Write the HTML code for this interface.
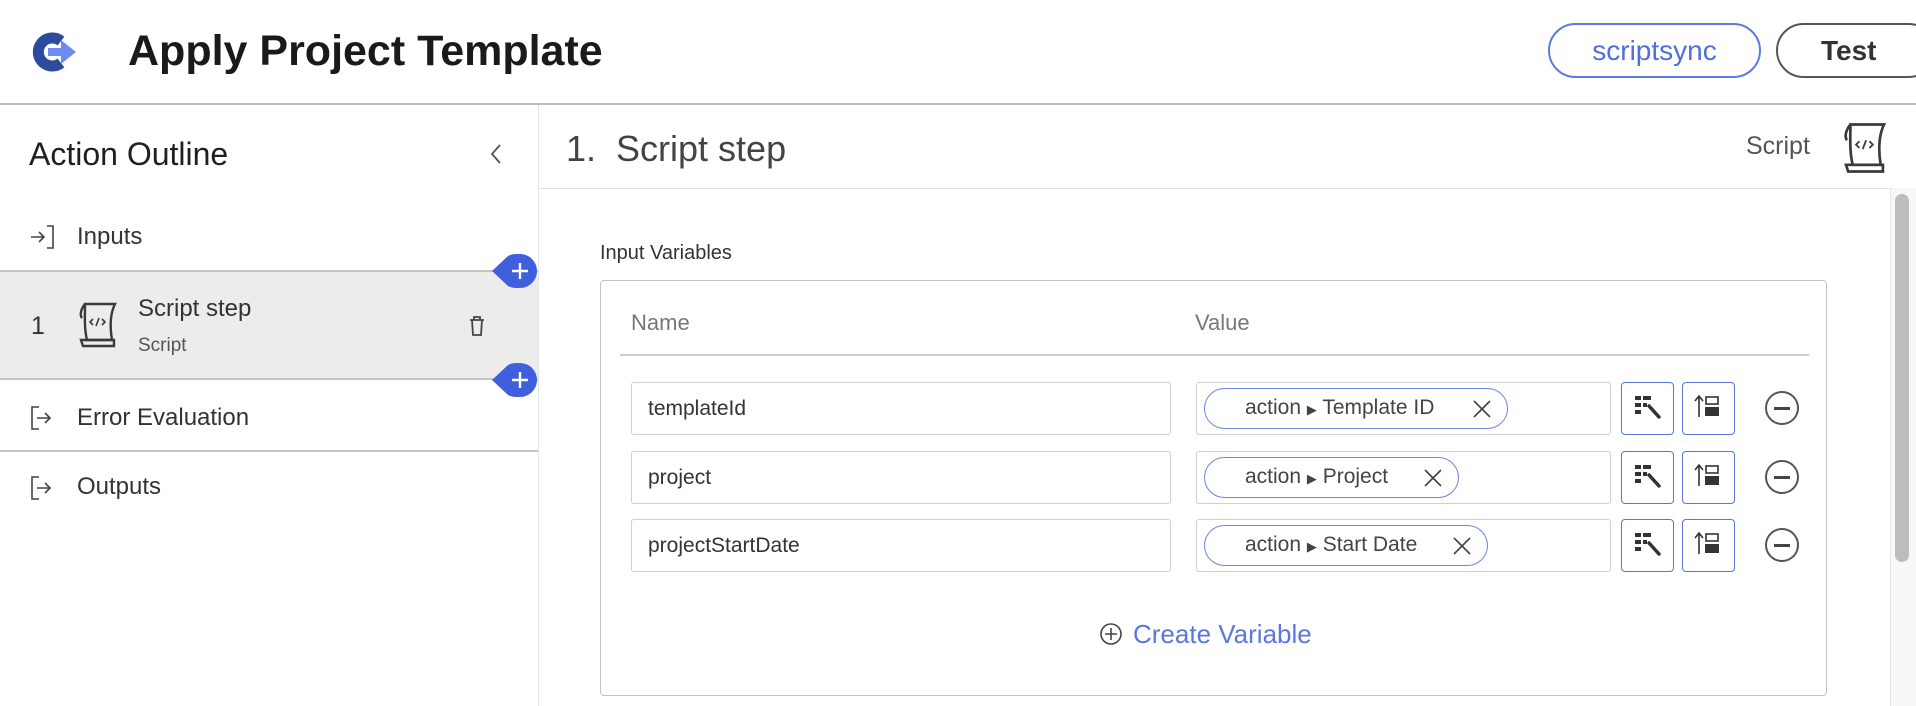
<!DOCTYPE html>
<html><head><meta charset="utf-8"><style>
*{margin:0;padding:0;box-sizing:border-box}
body{width:1916px;height:706px;overflow:hidden;background:#fff;font-family:"Liberation Sans",sans-serif;color:#2a2a2a;position:relative}
.a{position:absolute}
.t{position:absolute;white-space:nowrap;line-height:1}
.inp{position:absolute;border:1.5px solid #cfcfcf;border-radius:3px;background:#fff}
.pill{position:absolute;border:1.5px solid #6a86e0;border-radius:22px;height:41px;font-size:21px;color:#444;line-height:38px;padding-left:40px}
.pill svg{position:absolute;right:16px;top:11px}
.btn{position:absolute;width:53px;height:53px;border:1.5px solid #5a75d8;border-radius:4px;background:#fff}
.mc{position:absolute;width:34px;height:34px;border:2px solid #555;border-radius:50%}
.mc:after{content:"";position:absolute;left:7px;right:7px;top:14px;height:2.5px;background:#444}
</style></head><body>
<svg class="a" style="left:30px;top:30px" width="54" height="44" viewBox="0 0 54 44">
<path d="M31 11 A14 14 0 1 0 31 33" stroke="#2c4a9e" stroke-width="11" fill="none"/>
<path d="M18 18 H31 V10 L46 22 L31 34 V26 H18 Z" fill="#6d8cf0"/>
</svg>
<div class="t" style="left:128px;top:30px;font-size:43px;font-weight:bold;color:#1a1a1a">Apply Project Template</div>
<div class="a" style="left:1548px;top:23px;width:213px;height:55px;border:2px solid #5a7be0;border-radius:28px;color:#4f6fdc;font-size:28px;text-align:center;line-height:51px">scriptsync</div>
<div class="a" style="left:1776px;top:23px;width:160px;height:55px;border:2px solid #555;border-radius:28px;color:#333;font-size:28px;font-weight:bold;padding-left:43px;line-height:51px">Test</div>
<div class="a" style="left:0;top:103px;width:1916px;height:2px;background:#bdbdbd"></div>
<div class="a" style="left:538px;top:105px;width:1px;height:601px;background:#e4e4e4"></div>
<div class="t" style="left:29px;top:138px;font-size:32px;color:#1f1f1f">Action Outline</div>
<svg class="a" style="left:488px;top:142px" width="16" height="24"><path d="M12 3 L4 12 L12 21" stroke="#555" stroke-width="1.8" fill="none"/></svg>
<svg class="a" style="left:29px;top:223px" width="28" height="28" viewBox="0 0 28 28"><path d="M2 14 H15 M10 9 L15 14 L10 19" stroke="#444" stroke-width="1.6" fill="none"/><path d="M18 3 H24 V25 H18" stroke="#444" stroke-width="1.6" fill="none"/></svg>
<div class="t" style="left:77px;top:225px;font-size:24px;color:#333">Inputs</div>
<div class="a" style="left:0;top:270px;width:538px;height:110px;background:#ececec;border-top:2px solid #c4c4c4;border-bottom:2px solid #c4c4c4"></div>
<div class="t" style="left:31px;top:314px;font-size:25px;color:#333">1</div>
<svg class="a" style="left:76px;top:300px" width="44" height="50" viewBox="0 0 44 50"><path d="M9 4 H39 C34 14 34 28 36 40 H11 C8 28 9 14 9 4 Z M9 4 C4 10 4 16 6 18" stroke="#3a3a3a" stroke-width="2.4" fill="none"/><path d="M5 40 H38 V46 H7 Z" stroke="#3a3a3a" stroke-width="2.4" fill="none"/><path d="M17 19 L14 22 L17 25 M20 26 L23 18 M26 19 L29 22 L26 25" stroke="#3a3a3a" stroke-width="1.6" fill="none"/></svg>
<div class="t" style="left:138px;top:297px;font-size:24px;color:#333">Script step</div>
<div class="t" style="left:138px;top:336px;font-size:19px;color:#555">Script</div>
<svg class="a" style="left:467px;top:315px" width="20" height="22" viewBox="0 0 20 22"><path d="M3 5 H17 M7 5 V2 H13 V5 M5 5 L6 20 H14 L15 5" stroke="#444" stroke-width="1.8" fill="none"/></svg>
<svg class="a" style="left:490px;top:252px" width="50" height="38" viewBox="0 0 50 38"><path d="M2 19 L18 4 A17 17 0 1 1 18 34 Z" fill="#3f5fdc"/><circle cx="30" cy="19" r="17" fill="#3f5fdc"/><path d="M30 11 V27 M22 19 H38" stroke="#fff" stroke-width="2.4"/></svg>
<svg class="a" style="left:490px;top:361px" width="50" height="38" viewBox="0 0 50 38"><path d="M2 19 L18 4 A17 17 0 1 1 18 34 Z" fill="#3f5fdc"/><circle cx="30" cy="19" r="17" fill="#3f5fdc"/><path d="M30 11 V27 M22 19 H38" stroke="#fff" stroke-width="2.4"/></svg>
<svg class="a" style="left:29px;top:404px" width="28" height="28" viewBox="0 0 28 28"><path d="M10 3 H3 V25 H10" stroke="#444" stroke-width="1.6" fill="none"/><path d="M8 14 H21 M16 9 L21 14 L16 19" stroke="#444" stroke-width="1.6" fill="none"/></svg>
<div class="t" style="left:77px;top:406px;font-size:24px;color:#333">Error Evaluation</div>
<div class="a" style="left:0;top:450px;width:538px;height:2px;background:#c4c4c4"></div>
<svg class="a" style="left:29px;top:474px" width="28" height="28" viewBox="0 0 28 28"><path d="M10 3 H3 V25 H10" stroke="#444" stroke-width="1.6" fill="none"/><path d="M8 14 H21 M16 9 L21 14 L16 19" stroke="#444" stroke-width="1.6" fill="none"/></svg>
<div class="t" style="left:77px;top:475px;font-size:24px;color:#333">Outputs</div>
<div class="t" style="left:566px;top:131px;font-size:36px;color:#444">1.&nbsp; Script step</div>
<div class="t" style="left:1746px;top:134px;font-size:25px;color:#555">Script</div>
<svg class="a" style="left:1838px;top:120px" width="54" height="56" viewBox="0 0 44 50"><path d="M9 4 H39 C34 14 34 28 36 40 H11 C8 28 9 14 9 4 Z M9 4 C4 10 4 16 6 18" stroke="#3a3a3a" stroke-width="2.4" fill="none"/><path d="M5 40 H38 V46 H7 Z" stroke="#3a3a3a" stroke-width="2.4" fill="none"/><path d="M17 19 L14 22 L17 25 M20 26 L23 18 M26 19 L29 22 L26 25" stroke="#3a3a3a" stroke-width="1.6" fill="none"/></svg>
<div class="a" style="left:539px;top:188px;width:1351px;height:1px;background:#e2e2e2"></div>
<div class="a" style="left:1890px;top:188px;width:26px;height:518px;background:#f7f7f7;border-left:1px solid #e6e6e6"></div>
<div class="a" style="left:1895px;top:194px;width:14px;height:368px;background:#bdbdbd;border-radius:7px"></div>
<div class="t" style="left:600px;top:243px;font-size:20px;color:#333">Input Variables</div>
<div class="a" style="left:600px;top:280px;width:1227px;height:416px;border:1.5px solid #c4c4c4;border-radius:4px"></div>
<div class="t" style="left:631px;top:312px;font-size:22px;color:#777">Name</div>
<div class="t" style="left:1195px;top:312px;font-size:22px;color:#777">Value</div>
<div class="a" style="left:620px;top:354px;width:1189px;height:1.5px;background:#cfcfcf"></div>

<div class="inp" style="left:631px;top:382px;width:540px;height:53px"></div>
<div class="t" style="left:648px;top:398px;font-size:21px;color:#333">templateId</div>
<div class="inp" style="left:1196px;top:382px;width:415px;height:53px"></div>
<div class="pill" style="left:1204px;top:388px;width:304px">action <span style="font-size:13px">&#9654;</span> Template ID<svg width="18" height="18"><path d="M1 1 L17 17 M17 1 L1 17" stroke="#444" stroke-width="1.6"/></svg></div>
<div class="btn" style="left:1621px;top:382px"></div><div class="btn" style="left:1682px;top:382px"></div>
<div class="mc" style="left:1765px;top:391px"></div>

<div class="inp" style="left:631px;top:451px;width:540px;height:53px"></div>
<div class="t" style="left:648px;top:467px;font-size:21px;color:#333">project</div>
<div class="inp" style="left:1196px;top:451px;width:415px;height:53px"></div>
<div class="pill" style="left:1204px;top:457px;width:255px">action <span style="font-size:13px">&#9654;</span> Project<svg width="18" height="18"><path d="M1 1 L17 17 M17 1 L1 17" stroke="#444" stroke-width="1.6"/></svg></div>
<div class="btn" style="left:1621px;top:451px"></div><div class="btn" style="left:1682px;top:451px"></div>
<div class="mc" style="left:1765px;top:460px"></div>

<div class="inp" style="left:631px;top:519px;width:540px;height:53px"></div>
<div class="t" style="left:648px;top:535px;font-size:21px;color:#333">projectStartDate</div>
<div class="inp" style="left:1196px;top:519px;width:415px;height:53px"></div>
<div class="pill" style="left:1204px;top:525px;width:284px">action <span style="font-size:13px">&#9654;</span> Start Date<svg width="18" height="18"><path d="M1 1 L17 17 M17 1 L1 17" stroke="#444" stroke-width="1.6"/></svg></div>
<div class="btn" style="left:1621px;top:519px"></div><div class="btn" style="left:1682px;top:519px"></div>
<div class="mc" style="left:1765px;top:528px"></div>

<svg class="a" style="left:0;top:0" width="1916" height="706" pointer-events="none">
<g id="i1"><g fill="#333"><rect x="1635" y="396" width="6" height="4"/><rect x="1643" y="396" width="8" height="4"/><rect x="1635" y="403" width="6" height="4"/><rect x="1643" y="403" width="4" height="4"/><rect x="1635" y="410" width="6" height="4"/></g><path d="M1649 406 L1659 417" stroke="#333" stroke-width="3.5" stroke-linecap="round"/></g>
<use href="#i1" y="69"/><use href="#i1" y="137"/>
<g id="i2"><path d="M1699 397 V417 M1695 401 L1699 396 L1703 401" stroke="#333" stroke-width="1.6" fill="none"/><rect x="1706" y="397" width="12" height="7" fill="none" stroke="#333" stroke-width="1.6"/><rect x="1705" y="407" width="14" height="9" fill="#333"/></g>
<use href="#i2" y="69"/><use href="#i2" y="137"/>
<circle cx="1111" cy="634" r="10" fill="none" stroke="#444" stroke-width="1.6"/><path d="M1111 628 V640 M1105 634 H1117" stroke="#444" stroke-width="1.6"/>
</svg>
<div class="t" style="left:1133px;top:621px;font-size:26px;color:#5a78dc">Create Variable</div>
</body></html>
